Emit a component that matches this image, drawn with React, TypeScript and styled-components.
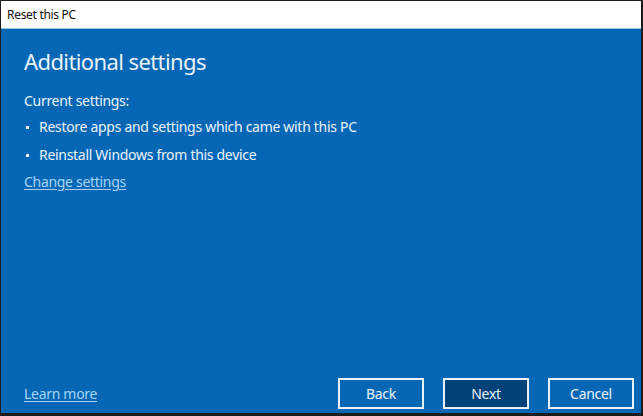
import React from "react";
import styled, { createGlobalStyle } from "styled-components";

const GlobalStyle = createGlobalStyle`
  html, body {
    margin: 0;
    padding: 0;
    background: #fff;
  }
  body {
    font-family: "Noto Sans", "Open Sans", sans-serif;
  }
`;

const SWindow = styled.div`
  width: 643px;
  height: 416px;
  box-sizing: border-box;
  border-top: 1px solid #1c1c1c;
  border-left: 1px solid #1c1c1c;
  border-right: 2px solid #1c1c1c;
  border-bottom: 3px solid #1c1c1c;
  display: flex;
  flex-direction: column;
  overflow: hidden;
`;

const STitleBar = styled.div`
  height: 27px;
  background: #fff;
  border-bottom: 1px solid #9cc8e6;
  display: flex;
  align-items: center;
  padding-left: 6px;
  font-size: 12px;
  color: #111;
  letter-spacing: -0.3px;
`;

const SBody = styled.div`
  flex: 1;
  background: #0467b6;
  color: #eaf3fb;
  display: flex;
  flex-direction: column;
  padding: 0 7px 4px 23px;
  letter-spacing: -0.3px;
`;

const SHeading = styled.h1`
  margin: 17px 0 0;
  font-size: 22px;
  font-weight: 400;
  line-height: 30px;
  letter-spacing: -0.6px;
`;

const SLabel = styled.div`
  margin-top: 15px;
  font-size: 14px;
  line-height: 20px;
`;

const SList = styled.ul`
  list-style: none;
  margin: 6px 0 0;
  padding: 0;
  display: flex;
  flex-direction: column;
  gap: 8px;
`;

const SItem = styled.li`
  display: flex;
  align-items: center;
  font-size: 14px;
  line-height: 20px;
  &::before {
    content: "";
    width: 3px;
    height: 3px;
    background: #eaf3fb;
    margin: 0 10px 0 2px;
  }
`;

const SLink = styled.a<{ top?: number }>`
  display: inline-block;
  margin-top: ${(p) => p.top ?? 0}px;
  font-size: 14px;
  line-height: 20px;
  color: #a7d4f5;
  text-decoration: underline;
  text-underline-offset: 2px;
  cursor: pointer;
`;

const SFooter = styled.div`
  margin-top: auto;
  display: flex;
  align-items: center;
`;

const SButtons = styled.div`
  margin-left: auto;
  display: flex;
  gap: 19px;
`;

const SButton = styled.button<{ primary?: boolean }>`
  width: 86px;
  height: 31px;
  box-sizing: border-box;
  border: 2px solid #e6f1fa;
  background: ${(p) => (p.primary ? "#00427a" : "transparent")};
  color: #eaf3fb;
  font-family: inherit;
  font-size: 14px;
  letter-spacing: -0.3px;
  padding: 0;
  cursor: pointer;
`;

export default function App() {
  return (
    <>
      <GlobalStyle />
      <SWindow>
        <STitleBar>Reset this PC</STitleBar>
        <SBody>
          <SHeading>Additional settings</SHeading>
          <SLabel>Current settings:</SLabel>
          <SList>
            <SItem>Restore apps and settings which came with this PC</SItem>
            <SItem>Reinstall Windows from this device</SItem>
          </SList>
          <div>
            <SLink top={7}>Change settings</SLink>
          </div>
          <SFooter>
            <SLink>Learn more</SLink>
            <SButtons>
              <SButton>Back</SButton>
              <SButton primary>Next</SButton>
              <SButton>Cancel</SButton>
            </SButtons>
          </SFooter>
        </SBody>
      </SWindow>
    </>
  );
}
